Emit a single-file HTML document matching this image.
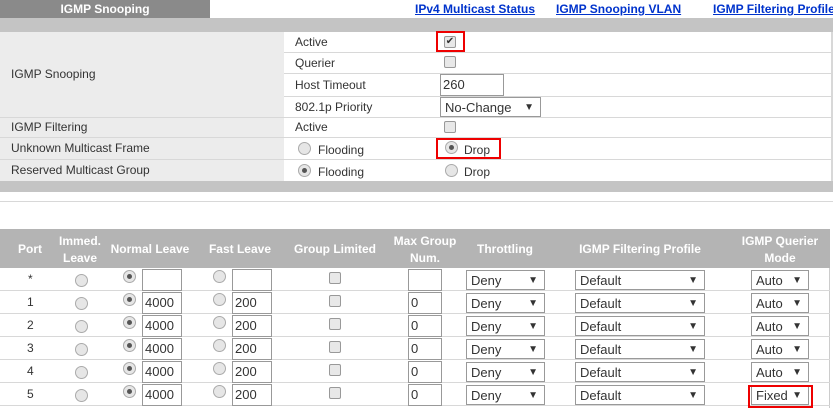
<!DOCTYPE html>
<html><head><style>
*{box-sizing:border-box;margin:0;padding:0}
body{width:833px;height:408px;background:#fff;font-family:"Liberation Sans",sans-serif;font-size:12px;color:#333;position:relative;overflow:hidden}
.a{position:absolute;white-space:nowrap}
.tab{left:0;top:0;width:210px;height:18px;background:#8a8a8a;color:#fff;font-weight:bold;text-align:center;line-height:18px;font-size:12px}
.lk{top:2px;color:#0033cc;text-decoration:underline;font-weight:bold;font-size:12px}
.bar{left:0;width:833px;background:#c4c4c4}
.lc{left:0;width:284px;background:#ececec}
.hl{height:1px;background:#d8d8d8}
.cb{width:12px;height:12px;border:1px solid #999;border-radius:2px;background:#e8e8e8}
.rd{width:13px;height:13px;border:1px solid #aaa;border-radius:50%;background:#e6e6e6}
.rd.on::after{content:"";position:absolute;left:3px;top:3px;width:5px;height:5px;border-radius:50%;background:#555}
.in{border:1px solid #999;background:#fff;padding-left:2px;height:22px;line-height:20px;font-size:13px}
.sel{border:1px solid #999;background:#fff;padding-left:4px;height:20px;line-height:19px;font-size:13px}
.sel b{position:absolute;right:6px;top:1px;font-size:10px;line-height:18px}
.red{border:2px solid #e00}
.th{top:229px;height:39px;background:#b4b4b4;width:830px;left:0}
.hd{color:#fff;font-weight:bold;text-align:center;font-size:12px;line-height:17px}
</style></head><body>
<div class="a tab">IGMP Snooping</div>
<div class="a lk" style="left:415px">IPv4 Multicast Status</div>
<div class="a lk" style="left:556px">IGMP Snooping VLAN</div>
<div class="a lk" style="left:713px">IGMP Filtering Profile</div>
<div class="a bar" style="top:18px;height:14px"></div>
<div class="a lc" style="top:32px;height:149px"></div>
<div class="a" style="left:831px;top:32px;width:2px;height:149px;background:#d8d8d8"></div>
<div class="a hl" style="left:284px;width:549px;top:52px"></div>
<div class="a hl" style="left:284px;width:549px;top:73px"></div>
<div class="a hl" style="left:284px;width:549px;top:96px"></div>
<div class="a hl" style="left:0;width:833px;top:117px"></div>
<div class="a hl" style="left:0;width:833px;top:137px"></div>
<div class="a hl" style="left:0;width:833px;top:159px"></div>
<div class="a bar" style="top:181px;height:11px"></div>
<div class="a" style="left:0;top:201px;width:833px;height:1px;background:#d8d8d8"></div>
<div class="a" style="left:11px;top:67px">IGMP Snooping</div>
<div class="a" style="left:11px;top:120px">IGMP Filtering</div>
<div class="a" style="left:11px;top:141px">Unknown Multicast Frame</div>
<div class="a" style="left:11px;top:163px">Reserved Multicast Group</div>
<div class="a" style="left:295px;top:35px">Active</div>
<div class="a" style="left:295px;top:56px">Querier</div>
<div class="a" style="left:295px;top:78px">Host Timeout</div>
<div class="a" style="left:295px;top:100px">802.1p Priority</div>
<div class="a" style="left:295px;top:120px">Active</div>
<div class="a red" style="left:436px;top:31px;width:29px;height:21px"></div>
<div class="a cb" style="left:444px;top:36px;font-size:10px;line-height:10px;text-align:center">✔</div>
<div class="a cb" style="left:444px;top:56px"></div>
<div class="a in" style="left:440px;top:74px;width:64px">260</div>
<div class="a sel" style="left:440px;top:97px;width:101px;height:20px">No-Change<b>▼</b></div>
<div class="a cb" style="left:444px;top:121px"></div>
<div class="a rd" style="left:298px;top:142px"></div><div class="a" style="left:318px;top:143px">Flooding</div>
<div class="a rd on" style="left:298px;top:164px"></div><div class="a" style="left:318px;top:165px">Flooding</div>
<div class="a red" style="left:436px;top:138px;width:65px;height:21px"></div>
<div class="a rd on" style="left:445px;top:141px"></div><div class="a" style="left:464px;top:143px">Drop</div>
<div class="a rd" style="left:445px;top:164px"></div><div class="a" style="left:464px;top:165px">Drop</div>

<div class="a th"></div>
<div class="a hd" style="left:10px;width:40px;top:241px">Port</div>
<div class="a hd" style="left:52px;width:56px;top:233px">Immed.<br>Leave</div>
<div class="a hd" style="left:104px;width:92px;top:241px">Normal Leave</div>
<div class="a hd" style="left:203px;width:74px;top:241px">Fast Leave</div>
<div class="a hd" style="left:285px;width:100px;top:241px">Group Limited</div>
<div class="a hd" style="left:385px;width:80px;top:233px">Max Group<br>Num.</div>
<div class="a hd" style="left:465px;width:80px;top:241px">Throttling</div>
<div class="a hd" style="left:570px;width:140px;top:241px">IGMP Filtering Profile</div>
<div class="a hd" style="left:730px;width:100px;top:233px">IGMP Querier<br>Mode</div>
<div class="a" style="left:829px;top:268px;width:1px;height:140px;background:#ccc"></div>
<div id="rows"></div>
<script>
var ports=["*","1","2","3","4","5"],h="";
for(var i=0;i<6;i++){var y=268+i*23;
h+='<div class="a hl" style="left:0;width:830px;top:'+(y+22)+'px"></div>';
h+='<div class="a" style="left:'+(i==0?28:27)+'px;top:'+(y+4)+'px">'+ports[i]+'</div>';
h+='<div class="a rd" style="left:75px;top:'+(y+6)+'px"></div>';
h+='<div class="a rd on" style="left:123px;top:'+(y+2)+'px"></div>';
h+='<div class="a in" style="left:142px;top:'+(y+1)+'px;width:40px">'+(i?'4000':'')+'</div>';
h+='<div class="a rd" style="left:213px;top:'+(y+2)+'px"></div>';
h+='<div class="a in" style="left:232px;top:'+(y+1)+'px;width:40px">'+(i?'200':'')+'</div>';
h+='<div class="a cb" style="left:329px;top:'+(y+4)+'px"></div>';
h+='<div class="a in" style="left:408px;top:'+(y+1)+'px;width:34px">'+(i?'0':'')+'</div>';
h+='<div class="a sel" style="left:466px;top:'+(y+2)+'px;width:79px">Deny<b>▼</b></div>';
h+='<div class="a sel" style="left:575px;top:'+(y+2)+'px;width:130px">Default<b>▼</b></div>';
h+='<div class="a sel" style="left:751px;top:'+(y+2)+'px;width:58px">'+(i==5?'Fixed':'Auto')+'<b>▼</b></div>';
}
h+='<div class="a red" style="left:748px;top:385px;width:65px;height:23px"></div>';
document.getElementById("rows").innerHTML=h;
</script>
</body></html>
